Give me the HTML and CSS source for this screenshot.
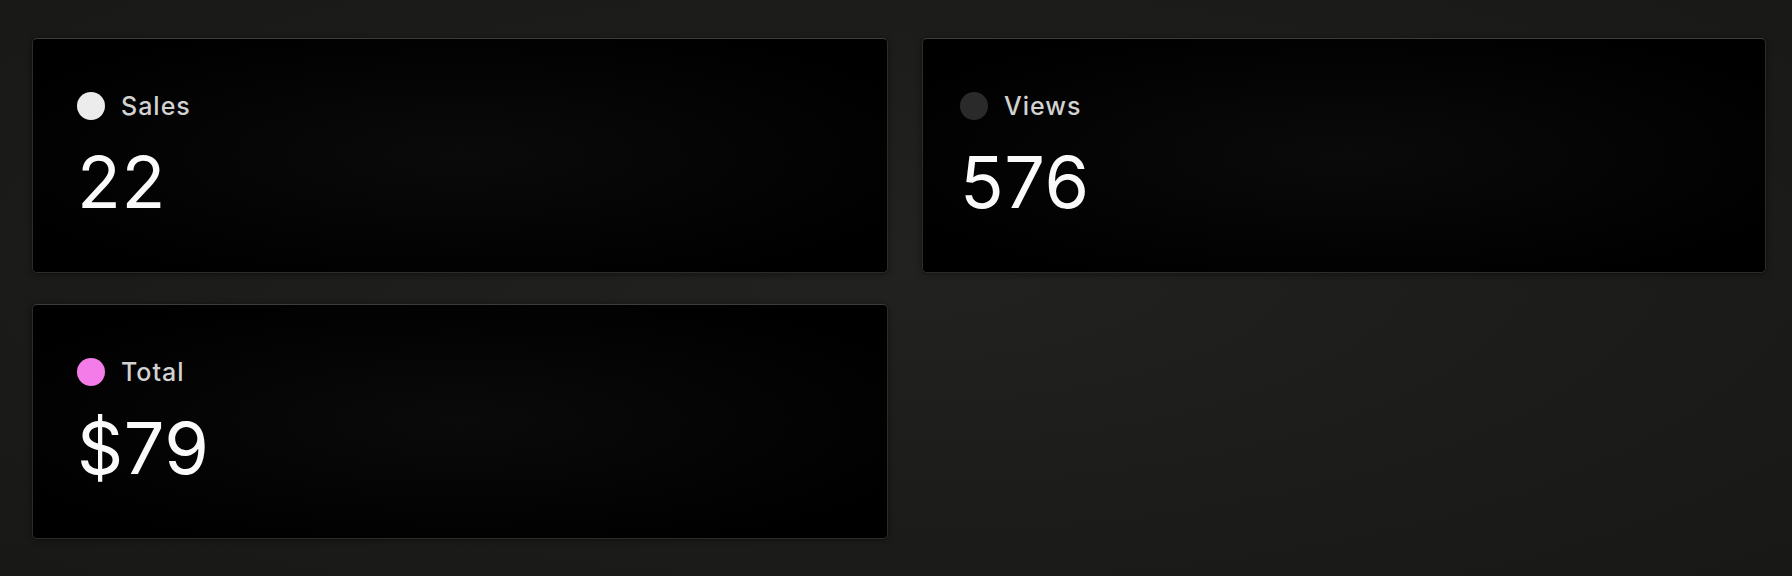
FILE: index.html
```html
<!DOCTYPE html>
<html lang="en">
<head>
    <meta charset="UTF-8">
    <meta name="viewport" content="width=device-width, initial-scale=1.0">
    <title>Stats</title>
    <link rel="stylesheet" href="styles.css">
</head>
<body>
    <div class="stats">
        <div class="stat-card">
            <div class="stat-label"><span class="dot dot-sales"></span>Sales</div>
            <div class="stat-value">22</div>
        </div>
        <div class="stat-card stat-card-right">
            <div class="stat-label"><span class="dot dot-views"></span>Views</div>
            <div class="stat-value">576</div>
        </div>
        <div class="stat-card">
            <div class="stat-label"><span class="dot dot-total"></span>Total</div>
            <div class="stat-value">$79</div>
        </div>
    </div>
</body>
</html>
```

FILE: styles.css
```css
html, body {
    height: 100%;
}

body {
    margin: 0;
    font-family: Inter, "Noto Sans", Arial, sans-serif;
    background-color: #1c1c1a;
    background-image: radial-gradient(ellipse at 50% 45%, #222220 0%, #1c1c1a 55%, #181817 100%);
    color: #fff;
}

.stats {
    display: grid;
    grid-template-columns: 856px 1fr;
    grid-template-rows: 235px 235px;
    column-gap: 34px;
    row-gap: 31px;
    padding: 38px 26px 0 32px;
}

.stat-card {
    background-color: #000;
    background-image: radial-gradient(ellipse at 50% 50%, #0a0a0a 0%, #040404 50%, #000 85%);
    border: 1px solid #2c2c2b;
    border-top-color: #3c3c3a;
    border-radius: 5px;
    box-shadow: 0 1px 6px rgba(0, 0, 0, 0.45);
    padding: 53px 44px 0 44px;
    box-sizing: border-box;
}

.stat-card-right {
    padding-left: 37px;
}

.stat-label {
    display: flex;
    align-items: center;
    gap: 16px;
    height: 28px;
    font-size: 25px;
    font-weight: 500;
    color: #d2d2d2;
    letter-spacing: 1px;
}

.dot {
    width: 28px;
    height: 28px;
    border-radius: 50%;
    flex-shrink: 0;
}

.dot-sales {
    background-color: #ececec;
}

.dot-views {
    background-color: #2a2a2a;
}

.dot-total {
    background-color: #f47ce8;
}

.stat-value {
    margin-top: 26px;
    font-size: 72px;
    line-height: 1;
    font-weight: 400;
    color: #fafafa;
    letter-spacing: 0.5px;
}
```
